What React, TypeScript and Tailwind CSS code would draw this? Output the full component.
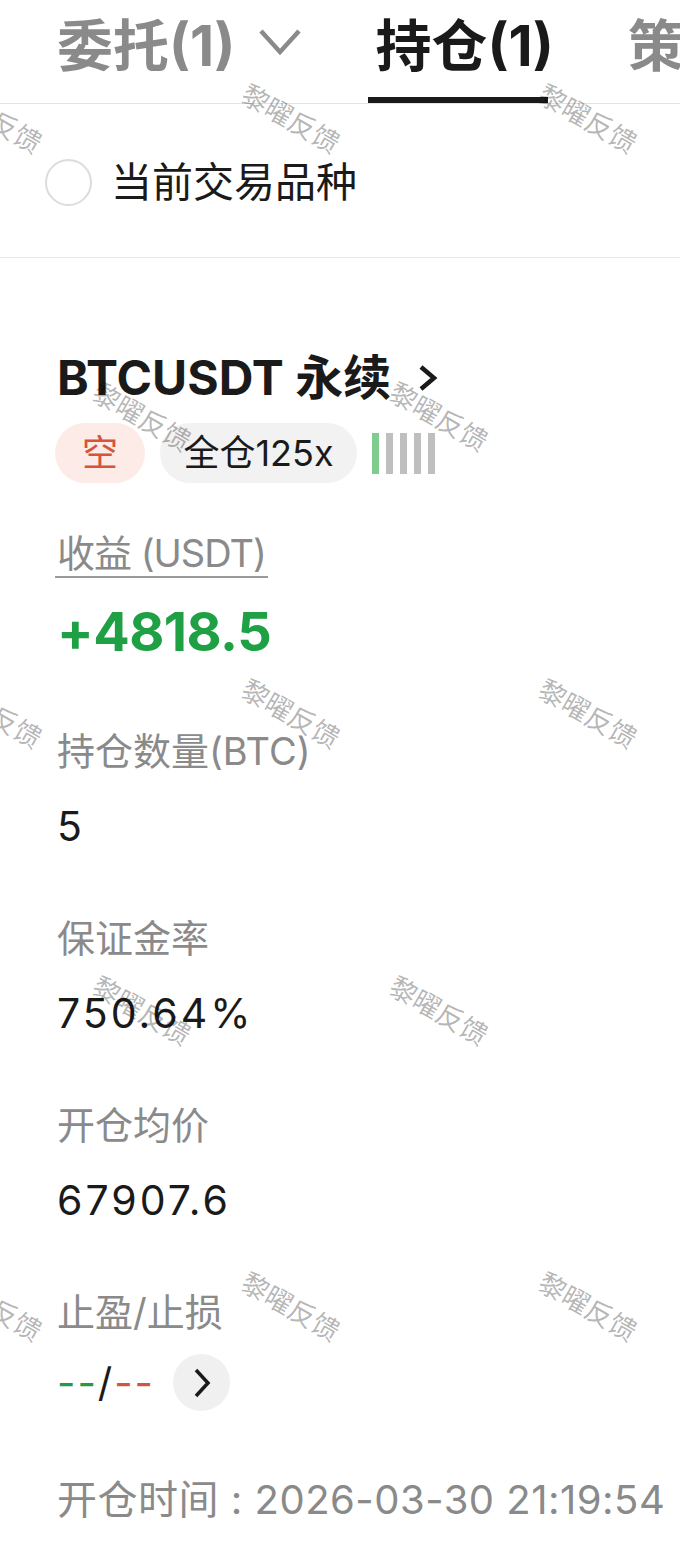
import React from "react";

const marks = [
  { x: -8, y: 120 },
  { x: 290, y: 120 },
  { x: 587, y: 120 },
  { x: 141, y: 418 },
  { x: 438, y: 418 },
  { x: -8, y: 715 },
  { x: 290, y: 715 },
  { x: 587, y: 715 },
  { x: 141, y: 1012 },
  { x: 438, y: 1012 },
  { x: -8, y: 1308 },
  { x: 290, y: 1308 },
  { x: 587, y: 1308 },
];

function Field({
  label,
  value,
  className,
}: {
  label: string;
  value: string;
  className: string;
}) {
  return (
    <div className={className}>
      <div className="h-[50px] leading-[50px] text-[38px] text-[#8a8a8a]">{label}</div>
      <div className="mt-[25px] h-[50px] leading-[50px] text-[41px] tracking-[3px] text-[#1a1a1a]">
        {value}
      </div>
    </div>
  );
}

export default function App() {
  return (
    <div className="relative w-[680px] h-[1562px] overflow-hidden bg-white font-['Inter','Noto_Sans_CJK_SC',sans-serif]">
      {/* tabs */}
      <div className="flex h-[104px] border-b border-[#e3e3e3] pl-[57px] whitespace-nowrap">
        <div className="flex items-start pt-[18px]">
          <span className="text-[56px] leading-[56px] font-bold text-[#8a8a8a]">委托(1)</span>
          <svg className="ml-[24px] mt-[10px]" width="42" height="28" viewBox="0 0 42 28">
            <path d="M2 3 L21 24 L40 3" fill="none" stroke="#8a8a8a" strokeWidth="4.5" />
          </svg>
        </div>
        <div className="ml-[74px] flex flex-col">
          <span className="pt-[18px] text-[56px] leading-[56px] font-bold text-[#1a1a1a]">持仓(1)</span>
          <div className="flex-1" />
          <div className="-ml-[7px] h-[6px] w-[180px] bg-[#1a1a1a]" />
        </div>
        <div className="ml-[74px] pt-[18px]">
          <span className="text-[56px] leading-[56px] font-bold text-[#8a8a8a]">策略</span>
        </div>
      </div>

      {/* filter */}
      <div className="flex items-center h-[154px] border-b border-[#e6e6e6] pl-[45px] pt-[4px]">
        <div className="w-[47px] h-[47px] rounded-full border-2 border-[#dcdcdc]" />
        <span className="ml-[19px] text-[41px] text-[#1a1a1a]">当前交易品种</span>
      </div>

      {/* position card */}
      <div className="pl-[57px]">
        <div className="mt-[95px] flex items-center h-[50px]">
          <span className="text-[48px] leading-[50px] font-bold text-[#1a1a1a]">BTCUSDT 永续</span>
          <svg className="ml-[27px]" width="20" height="26" viewBox="0 0 20 26">
            <path d="M3 2 L16 13 L3 24" fill="none" stroke="#1a1a1a" strokeWidth="4.5" />
          </svg>
        </div>

        <div className="mt-[20px] -ml-[2px] flex items-center h-[60px]">
          <span className="flex items-center justify-center w-[90px] h-[60px] rounded-full bg-[#fdebe7] text-[36px] text-[#d5553c]">
            空
          </span>
          <span className="ml-[15px] flex items-center justify-center w-[197px] h-[60px] rounded-full bg-[#f2f2f2] text-[36px] text-[#1a1a1a]">
            全仓125x
          </span>
          <div className="ml-[15px] flex gap-[7px] h-[41px]">
            <div className="w-[7px] bg-[#7fcd8e]" />
            <div className="w-[7px] bg-[#bfbfbf]" />
            <div className="w-[7px] bg-[#bfbfbf]" />
            <div className="w-[7px] bg-[#bfbfbf]" />
            <div className="w-[7px] bg-[#bfbfbf]" />
          </div>
        </div>

        <div className="mt-[47px] -ml-[2px]">
          <span className="inline-block h-[48px] leading-[46px] pl-[2px] pr-[2px] border-b-2 border-[#9a9a9a] text-[38px] tracking-[-1px] text-[#8a8a8a]">
            收益 (USDT)
          </span>
        </div>
        <div className="mt-[24px] h-[60px] leading-[60px] text-[54px] tracking-[-0.5px] font-bold text-[#1fa045]">
          +4818.5
        </div>

        <Field className="mt-[64px]" label="持仓数量(BTC)" value="5" />
        <Field className="mt-[62px]" label="保证金率" value="750.64%" />
        <Field className="mt-[62px]" label="开仓均价" value="67907.6" />

        <div className="mt-[62px]">
          <div className="h-[50px] leading-[50px] text-[38px] text-[#8a8a8a]">止盈/止损</div>
          <div className="mt-[17px] flex items-center h-[57px]">
            <span className="text-[40px] leading-[50px] tracking-[2px]">
              <span className="text-[#239a43]">--</span>
              <span className="text-[#1a1a1a]">/</span>
              <span className="text-[#d0573f]">--</span>
            </span>
            <span className="ml-[18px] flex items-center justify-center w-[57px] h-[57px] rounded-full bg-[#f0f0f0]">
              <svg width="20" height="30" viewBox="0 0 20 30">
                <path d="M4 2 L16 15 L4 28" fill="none" stroke="#1a1a1a" strokeWidth="3.5" />
              </svg>
            </span>
          </div>
        </div>

        <div className="mt-[64px] h-[50px] leading-[50px] text-[40px] tracking-[0.5px] text-[#8a8a8a] whitespace-nowrap">
          开仓时间 : 2026-03-30 21:19:54
        </div>
      </div>

      {/* watermark */}
      {marks.map((m, i) => (
        <span
          key={i}
          className="pointer-events-none absolute -translate-x-1/2 -translate-y-1/2 rotate-[30deg] whitespace-nowrap text-[27px] text-black/30"
          style={{ left: m.x, top: m.y }}
        >
          黎曜反馈
        </span>
      ))}
    </div>
  );
}
